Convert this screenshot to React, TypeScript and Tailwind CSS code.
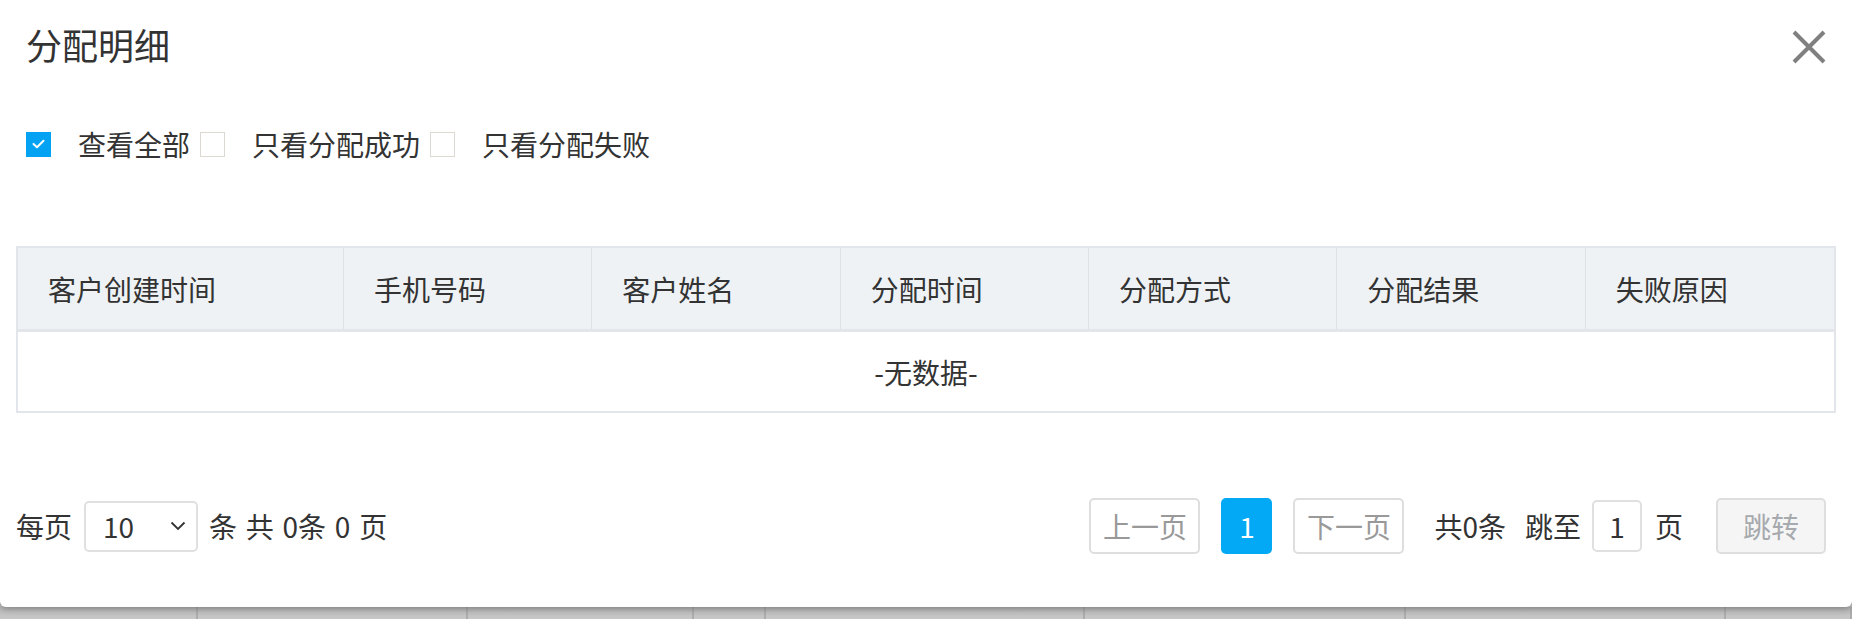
import React from 'react';

const columns = ['客户创建时间', '手机号码', '客户姓名', '分配时间', '分配方式', '分配结果', '失败原因'];
const filters = [
    { label: '查看全部', checked: true },
    { label: '只看分配成功', checked: false },
    { label: '只看分配失败', checked: false },
];
// widths of the page-behind table columns peeking under the dialog
const backdropCells = [198, 270, 226, 72, 319, 321, 320, 126];

function CheckBox({ checked }: { checked: boolean }) {
    if (checked) {
        return (
            <span className="flex h-[25px] w-[25px] shrink-0 items-center justify-center bg-[#03a2f2]">
                <svg width="13" height="10" viewBox="0 0 13 10" fill="none">
                    <path d="M1.5 5 L5 8.3 L11.5 1.7" stroke="white" strokeWidth="2" strokeLinecap="round" strokeLinejoin="round" />
                </svg>
            </span>
        );
    }
    return <span className="h-[25px] w-[25px] shrink-0 border border-[#dcd9d3] bg-white" />;
}

export default function App() {
    return (
        <div className="flex h-[619px] w-[1852px] flex-col overflow-hidden bg-[#c4c4c4] font-['Noto_Sans_CJK_SC','Noto_Sans',sans-serif] text-[#333]">
            {/* Dialog */}
            <div className="relative z-10 flex h-[607px] shrink-0 flex-col rounded-b-[6px] bg-white shadow-[0_2px_6px_rgba(0,0,0,0.3)]">
                {/* Header */}
                <div className="flex h-[93px] items-center justify-between pl-[26px] pr-[25px]">
                    <h1 className="mb-[5px] text-[36px] font-normal leading-[36px] text-[#333]">分配明细</h1>
                    <button className="flex h-[36px] w-[36px] items-center justify-center">
                        <svg width="34" height="34" viewBox="0 0 34 34">
                            <path d="M2 2 L32 32 M32 2 L2 32" stroke="#808080" strokeWidth="4" />
                        </svg>
                    </button>
                </div>

                {/* Filters */}
                <div className="flex h-[102px] items-center pl-[26px] text-[28px] leading-[30px]">
                    {filters.map((f) => (
                        <label key={f.label} className="flex items-center">
                            <CheckBox checked={f.checked} />
                            <span className="ml-[27px] mr-[10px]">{f.label}</span>
                        </label>
                    ))}
                </div>

                {/* Table */}
                <div className="mx-[16px] mt-[51px] border-2 border-[#e2e6ea]">
                    <div className="grid h-[84px] grid-cols-[326px_repeat(6,1fr)] border-b-[3px] border-[#e2e6ea] bg-[#eef2f5]">
                        {columns.map((c, i) => (
                            <div
                                key={c}
                                className={`flex items-center pl-[30px] text-[28px] leading-[30px] ${i < columns.length - 1 ? 'border-r border-[#dde2e6]' : ''}`}
                            >
                                {c}
                            </div>
                        ))}
                    </div>
                    <div className="flex h-[79px] items-center justify-center text-[28px] leading-[30px]">-无数据-</div>
                </div>

                {/* Pagination */}
                <div className="mt-[85px] flex h-[56px] items-center justify-between pl-[16px] pr-[26px] text-[28px] leading-[30px]">
                    <div className="flex items-center">
                        <span>每页</span>
                        <div className="ml-[12px] mr-[11px] flex h-[51px] w-[114px] items-center justify-between rounded-[5px] border-2 border-[#e0e0e0] pl-[17px] pr-[10px]">
                            <span>10</span>
                            <svg width="16" height="10" viewBox="0 0 16 10" fill="none">
                                <path d="M1.5 1.5 L8 8 L14.5 1.5" stroke="#333" strokeWidth="1.8" />
                            </svg>
                        </div>
                        <span className="whitespace-pre [word-spacing:2.5px]">条 共 0条 0 页</span>
                    </div>

                    <div className="flex items-center">
                        <button className="flex h-[56px] w-[111px] items-center justify-center rounded-[5px] border-2 border-[#dedede] text-[#999]">
                            上一页
                        </button>
                        <button className="ml-[21px] flex h-[56px] w-[51px] items-center justify-center rounded-[5px] bg-[#03a9f4] text-white">
                            1
                        </button>
                        <button className="ml-[21px] flex h-[56px] w-[111px] items-center justify-center rounded-[5px] border-2 border-[#dedede] text-[#999]">
                            下一页
                        </button>
                        <span className="ml-[30px]">共0条</span>
                        <span className="ml-[19px]">跳至</span>
                        <div className="ml-[11px] flex h-[52px] w-[50px] items-center justify-center rounded-[5px] border-2 border-[#e0e0e0]">
                            1
                        </div>
                        <span className="ml-[13px]">页</span>
                        <button className="ml-[33px] flex h-[56px] w-[110px] items-center justify-center rounded-[5px] border-2 border-[#dedede] bg-[#f5f5f5] text-[#a6a9ad]">
                            跳转
                        </button>
                    </div>
                </div>
            </div>

            {/* Page behind the dialog */}
            <div className="flex flex-1 bg-gradient-to-b from-[#b9b9b9] to-[#c8c8c8]">
                {backdropCells.map((w, i) => (
                    <div key={i} className="h-full border-r-2 border-[#acacac]" style={{ width: w }} />
                ))}
            </div>
        </div>
    );
}
